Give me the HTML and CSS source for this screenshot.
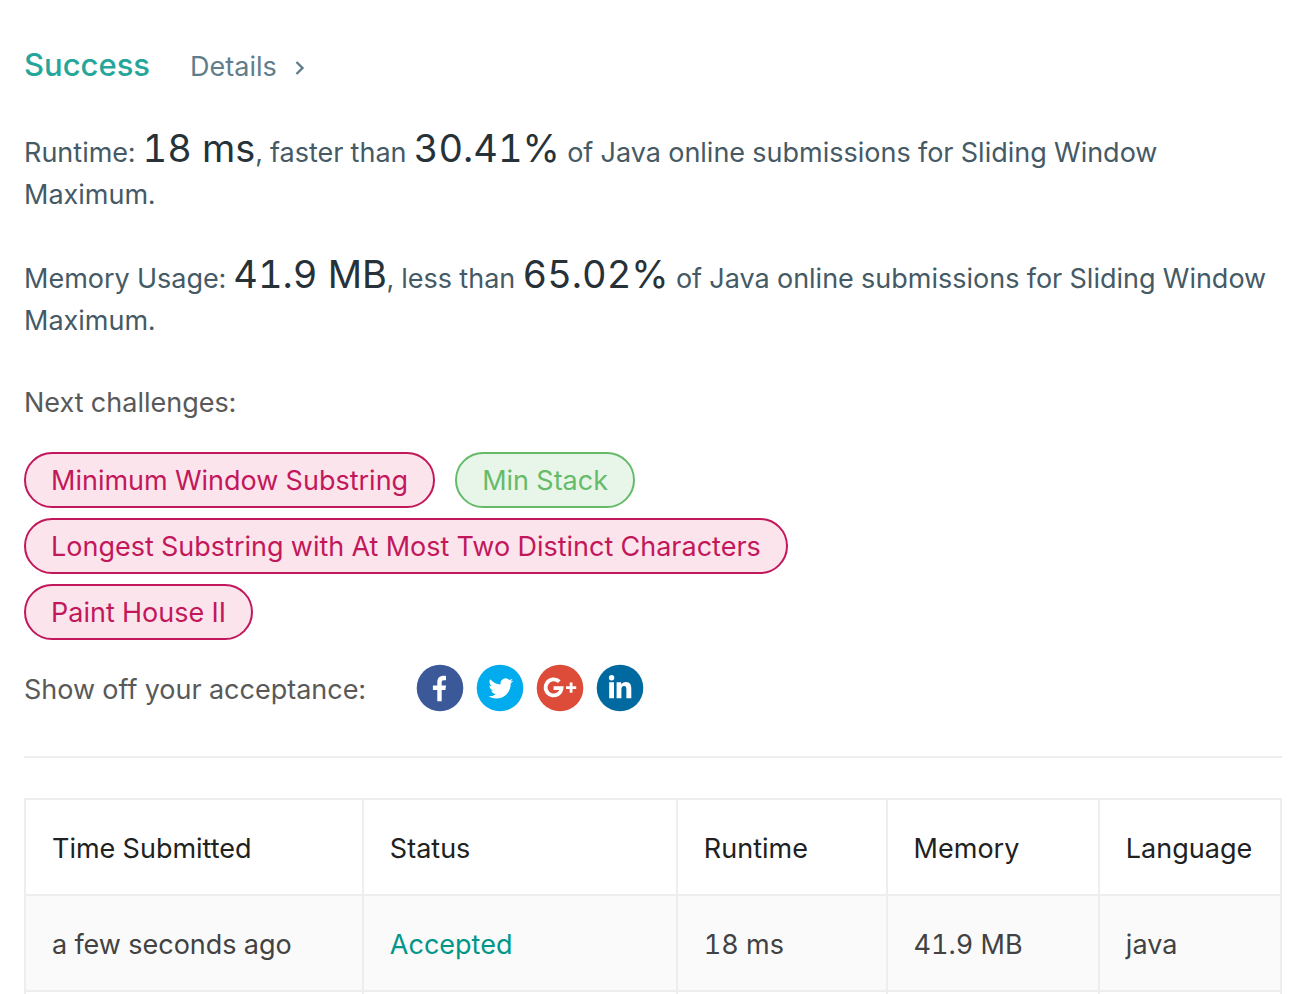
FILE: index.html
```html
<!DOCTYPE html>
<html lang="en">
<head>
<meta charset="utf-8">
<title>Submission result</title>
<link rel="stylesheet" href="styles.css">
</head>
<body>
<main class="result">
  <header class="result-header">
    <h1 class="status">Success</h1>
    <a class="details" href="#details">Details
      <svg class="chevron" viewBox="0 0 10 16" aria-hidden="true"><path d="M1.500 2 7.500 8l-6 6"/></svg>
    </a>
  </header>

  <p class="metric">Runtime: <span class="value">18 ms</span>, faster than <span class="value">30.41%</span> of Java online submissions for Sliding Window Maximum.</p>
  <p class="metric">Memory Usage: <span class="value">41.9 MB</span>, less than <span class="value">65.02%</span> of Java online submissions for Sliding Window Maximum.</p>

  <h2 class="label">Next challenges:</h2>
  <nav class="challenges" aria-label="Next challenges">
    <a class="pill hard" href="#minimum-window-substring">Minimum Window Substring</a>
    <a class="pill easy" href="#min-stack">Min Stack</a>
    <a class="pill hard" href="#longest-substring">Longest Substring with At Most Two Distinct Characters</a>
    <a class="pill hard" href="#paint-house-ii">Paint House II</a>
  </nav>

  <div class="share">
    <span class="label">Show off your acceptance:</span>
    <div class="networks">
      <a href="#facebook" aria-label="Facebook"><svg viewBox="0 0 48 48"><circle cx="24" cy="24" r="23.300" fill="#3b5998"/><path fill="#fff" d="M21.300 37.200V26h-4.400v-4.600h4.400v-3.300c0-4.200 2.500-6.400 6.300-6.400 1.300 0 2 .1 2.400.2v4.300h-2c-1.900 0-2.300.9-2.300 2.200v3h4.300l-.6 4.600h-3.700v11.200z"/></svg></a>
      <a href="#twitter" aria-label="Twitter"><svg viewBox="0 0 48 48"><circle cx="24" cy="24" r="23.300" fill="#00aced"/><path fill="#fff" transform="translate(12.500 12) scale(1.030)" d="M23.953 4.570a10 10 0 01-2.825.775 4.958 4.958 0 002.163-2.723c-.951.555-2.005.959-3.127 1.184a4.920 4.920 0 00-8.384 4.482C7.690 8.095 4.067 6.130 1.640 3.162a4.822 4.822 0 00-.666 2.475c0 1.710.870 3.213 2.188 4.096a4.904 4.904 0 01-2.228-.616v.060a4.923 4.923 0 003.946 4.827 4.996 4.996 0 01-2.212.085 4.936 4.936 0 004.604 3.417 9.867 9.867 0 01-6.102 2.105c-.390 0-.779-.023-1.170-.067a13.995 13.995 0 007.557 2.209c9.053 0 13.998-7.496 13.998-13.985 0-.210 0-.420-.015-.630A9.935 9.935 0 0024 4.590z"/></svg></a>
      <a href="#google-plus" aria-label="Google Plus"><svg viewBox="0 0 48 48"><circle cx="24" cy="24" r="23.300" fill="#dd4b39"/><path fill="none" stroke="#fff" stroke-width="3.800" d="M23.300 17.700A8 8 0 1 0 25.600 24.100H17.600"/><path fill="none" stroke="#fff" stroke-width="2.800" d="M30 23.600h10.200M35.100 18.500v10.200"/></svg></a>
      <a href="#linkedin" aria-label="LinkedIn"><svg viewBox="0 0 48 48"><circle cx="24" cy="24" r="23.300" fill="#0069a0"/><circle cx="15.600" cy="13.700" r="2.700" fill="#fff"/><path fill="#fff" d="M13.200 18.300h4.800v16h-4.800zM20.600 18.300h4.600v2.200c.8-1.500 2.500-2.600 4.700-2.600 4.400 0 5.400 3 5.400 7.100v9.300h-4.900v-8.400c0-2-.2-3.900-2.300-3.900s-2.700 1.700-2.700 3.900v8.400h-4.800z"/></svg></a>
    </div>
  </div>

  <hr class="divider">

  <table class="submissions">
    <colgroup>
      <col class="col-time"><col class="col-status"><col class="col-runtime"><col class="col-memory"><col class="col-language">
    </colgroup>
    <thead>
      <tr><th scope="col">Time Submitted</th><th scope="col">Status</th><th scope="col">Runtime</th><th scope="col">Memory</th><th scope="col">Language</th></tr>
    </thead>
    <tbody>
      <tr><td>a few seconds ago</td><td><a href="#submission">Accepted</a></td><td>18 ms</td><td>41.9 MB</td><td>java</td></tr>
      <tr><td></td><td></td><td></td><td></td><td></td></tr>
    </tbody>
  </table>
</main>
</body>
</html>
```
FILE: styles.css
```css
* {
  box-sizing: border-box;
}

body {
  margin: 0;
  background: #fff;
  color: #424242;
  font-family: Inter, "Liberation Sans", sans-serif;
  font-size: 27px;
  font-variant-numeric: tabular-nums;
  line-height: 42px;
}

a {
  color: inherit;
  text-decoration: none;
}

.result {
  height: 100vh;
  overflow: hidden;
  padding: 44px 8px 0 24px;
}

.result-header {
  display: flex;
  align-items: baseline;
  gap: 40px;
  margin-bottom: 44px;
}

.status {
  margin: 0;
  color: #26a69a;
  font-size: 31px;
  font-weight: 500;
}

.details {
  display: inline-flex;
  align-items: center;
  gap: 18px;
  color: #607d8b;
}

.chevron {
  width: 10px;
  height: 16px;
  margin-top: 2px;
  fill: none;
  stroke: currentColor;
  stroke-width: 2.4;
}

.metric {
  margin: 0 0 42px;
  color: #455a64;
}

.value {
  color: #263238;
  font-size: 38px;
  line-height: 24px;
}

.label {
  margin: 0;
  color: #595959;
  font-size: 27px;
  font-weight: 400;
}

.metric + .label {
  margin-top: -2px;
}

.challenges {
  display: flex;
  flex-wrap: wrap;
  gap: 10px 20px;
  max-width: 80%;
  margin: 28px 0 24px;
}

.pill {
  padding: 6px 25px 4px;
  border: 2px solid;
  border-radius: 28px;
}

.hard {
  background: #fce4ec;
  color: #c2185b;
  border-color: #c2185b;
}

.easy {
  background: #e8f5e9;
  color: #66bb6a;
}

.share {
  display: flex;
  align-items: center;
  gap: 50px;
}

.share .label {
  padding-top: 4px;
}

.networks {
  display: flex;
  gap: 12px;
}

.networks a,
.networks svg {
  display: block;
  width: 48px;
  height: 48px;
}

.divider {
  height: 2px;
  margin: 44px 0 40px;
  border: 0;
  background: #eee;
}

.submissions {
  width: 100%;
  border-collapse: collapse;
  table-layout: fixed;
}

.col-time { width: 26.9%; }
.col-status { width: 25%; }
.col-runtime { width: 16.7%; }
.col-memory { width: 16.9%; }
.col-language { width: 14.5%; }

.submissions th,
.submissions td {
  height: 96px;
  padding: 4px 26px 0;
  border: 2px solid #eee;
  font-weight: 400;
  text-align: left;
  white-space: nowrap;
}

.submissions th {
  color: #212121;
}

.submissions tbody tr:nth-child(odd) {
  background: #fafafa;
}

.submissions td a {
  color: #009688;
}
```
